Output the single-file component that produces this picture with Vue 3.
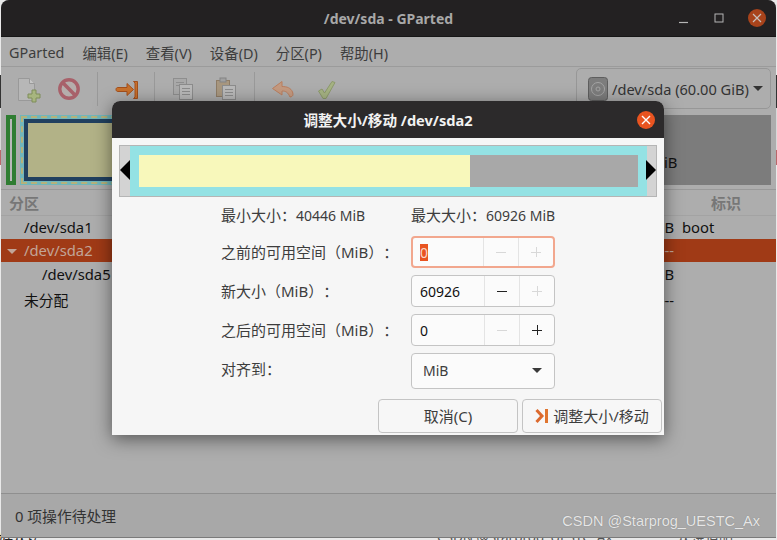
<script setup>
const menus = ['GParted', '编辑(E)', '查看(V)', '设备(D)', '分区(P)', '帮助(H)']
const rows = [
  { name: '/dev/sda1', cls: 'lvl0', tail: 'B', flag: 'boot' },
  { name: '/dev/sda2', cls: 'lvl0 sel', tail: '---', flag: '', caret: true },
  { name: '/dev/sda5', cls: 'lvl1', tail: 'B', flag: '' },
  { name: '未分配', cls: 'lvl0 tall', tail: '---', flag: '' }
]
const spins = [
  { label: '之前的可用空间（MiB）：', value: '0', minus: false, plus: false, focus: true },
  { label: '新大小（MiB）：', value: '60926', minus: true, plus: false, focus: false },
  { label: '之后的可用空间（MiB）：', value: '0', minus: false, plus: true, focus: false }
]
</script>

<template>
  <div class="screen">
    <div class="behind b1">好状接</div>
    <div class="behind b2">CSDN @Starprog_UESTC_Ax</div>
    <div class="behind b3">状况说明</div>
    <div class="window">
      <header class="titlebar">
        <span class="wintitle">/dev/sda - GParted</span>
        <div class="winbtns">
          <svg width="12" height="12" viewBox="0 0 12 12"><path d="M1 10.500h9" stroke="#b5b5b5" stroke-width="1.200"/></svg>
          <svg width="12" height="12" viewBox="0 0 12 12"><rect x="2" y="2" width="8" height="8" fill="none" stroke="#b5b5b5" stroke-width="1"/></svg>
          <span class="closebtn dim">
            <svg width="10" height="10" viewBox="0 0 10 10"><path d="M1 1l8 8M9 1l-8 8" stroke="#c8c0bc" stroke-width="1.200"/></svg>
          </span>
        </div>
      </header>
      <nav class="menubar">
        <span v-for="m in menus" :key="m">{{ m }}</span>
      </nav>
      <div class="toolbar">
        <div class="tools">
          <svg class="t-new" width="24" height="26" viewBox="0 0 24 26">
            <path d="M1.500 1.500h11l5 5v17h-16z" fill="#b7b7b7" stroke="#999"/>
            <path d="M12.500 1.500v5h5" fill="#c6c6c6" stroke="#999"/>
            <path d="M15 13h4v4h4v4h-4v4h-4v-4h-4v-4h4z" fill="#a7b57f" stroke="#7f8d5b"/>
          </svg>
          <svg class="t-no" width="24" height="24" viewBox="0 0 24 24">
            <circle cx="12" cy="12" r="9.200" fill="#b5aeac" stroke="#a8616a" stroke-width="3.400"/>
            <path d="M5.600 5.600l12.800 12.800" stroke="#a8616a" stroke-width="3.600"/>
          </svg>
          <i class="sep s1"></i>
          <svg class="t-move" width="24" height="20" viewBox="0 0 24 20">
            <path d="M1 9.500C1 8 2 7.500 3 7.500h9V3.500l6.500 6-6.500 6v-4H3c-1 0-2-.5-2-2z" fill="#c8712c" stroke="#a34f1c"/>
            <path d="M18.500 1.500h4v17h-4l1.500-1.500V3z" fill="#c8712c" stroke="#a34f1c"/>
          </svg>
          <i class="sep s2"></i>
          <svg class="t-copy" width="22" height="24" viewBox="0 0 22 24">
            <rect x="1.500" y="1.500" width="13" height="16" fill="#a9a9a9" stroke="#8e8e8e"/>
            <path d="M4 5.500h8M4 8.500h8" stroke="#8e8e8e"/>
            <rect x="7.500" y="7.500" width="13" height="15" fill="#b9b9b9" stroke="#8c8c8c"/>
            <path d="M10 11.500h8M10 14.500h8M10 17.500h8" stroke="#8c8c8c"/>
          </svg>
          <svg class="t-paste" width="22" height="24" viewBox="0 0 22 24">
            <rect x="1.500" y="3.500" width="13" height="16" fill="#a8977f" stroke="#8e7c66"/>
            <rect x="5" y="1" width="6" height="4" fill="#a0a0a0" stroke="#838383"/>
            <rect x="7.500" y="8.500" width="13" height="14" fill="#b9b9b9" stroke="#8c8c8c"/>
            <path d="M10 12.500h8M10 15.500h8M10 18.500h8" stroke="#8c8c8c"/>
          </svg>
          <i class="sep s3"></i>
          <svg class="t-undo" width="24" height="20" viewBox="0 0 24 20">
            <path d="M11 1.500L1.500 8.500 11 15v-4c4 0 6 1.500 8 6 3-.500 3.500-2 2.500-5C20 8 16 6.500 11 6.500z" fill="#c49a80" stroke="#bb7f5f" stroke-linejoin="round"/>
          </svg>
          <svg class="t-check" width="20" height="20" viewBox="0 0 20 20">
            <path d="M1.500 11l3.500-2 2.500 4L15 1.500l3 1L9 18.500H6z" fill="#a6b383" stroke="#8d9a6c"/>
          </svg>
        </div>
        <div class="devcombo">
          <svg width="20" height="24" viewBox="0 0 20 24">
            <rect x=".5" y=".5" width="19" height="23" rx="3" fill="#7d7d7d" stroke="#5e5e5e"/>
            <circle cx="10" cy="12" r="6.500" fill="none" stroke="#a5a5a5"/>
            <circle cx="10" cy="12" r="2" fill="none" stroke="#a5a5a5"/>
          </svg>
          <span class="devname">/dev/sda (60.00 GiB)</span>
          <i class="caret"></i>
        </div>
      </div>
      <section class="graph">
        <div class="g-first"><i></i></div>
        <div class="g-main"><div class="g-dash"><div class="g-inner"></div></div></div>
        <div class="g-last"><span>iB</span></div>
      </section>
      <section class="table">
        <div class="thead">
          <span>分区</span>
          <span class="h-flag">标识</span>
        </div>
        <div v-for="r in rows" :key="r.name" class="trow" :class="r.cls">
          <i v-if="r.caret" class="rowcaret"></i>
          <span class="pname">{{ r.name }}</span>
          <span class="ptail">{{ r.tail }}</span>
          <span class="pflag">{{ r.flag }}</span>
        </div>
      </section>
      <footer class="status">0 项操作待处理</footer>
    </div>

    <div class="dialog">
      <header class="dlgtitle">
        <span>调整大小/移动 /dev/sda2</span>
        <span class="closebtn">
          <svg width="10" height="10" viewBox="0 0 10 10"><path d="M1 1l8 8M9 1l-8 8" stroke="#fff" stroke-width="1.400"/></svg>
        </span>
      </header>
      <div class="dlgbody">
        <div class="resizer">
          <i class="arrow left"></i>
          <div class="rz-outer">
            <div class="rz-used"></div>
            <div class="rz-free"></div>
          </div>
          <i class="arrow right"></i>
        </div>
        <div class="info">
          <div class="info-cell">最小大小：<b>40446 MiB</b></div>
          <div class="info-cell">最大大小：<b>60926 MiB</b></div>
        </div>
        <div class="form">
          <template v-for="s in spins" :key="s.label">
            <label>{{ s.label }}</label>
            <div class="spin" :class="{ focus: s.focus }">
              <span class="val"><em v-if="s.focus">{{ s.value }}</em><template v-else>{{ s.value }}</template></span>
              <span class="sb" :class="{ off: !s.minus }"><svg width="14" height="14" viewBox="0 0 14 14"><path d="M2 7.500h10" stroke="currentColor"/></svg></span>
              <span class="sb" :class="{ off: !s.plus }"><svg width="14" height="14" viewBox="0 0 14 14"><path d="M2 7.500h10M7.500 2v10" stroke="currentColor"/></svg></span>
            </div>
          </template>
          <label>对齐到：</label>
          <div class="combo"><span>MiB</span><i class="caret"></i></div>
        </div>
        <div class="actions">
          <button class="btn"><span>取消(C)</span></button>
          <button class="btn">
            <svg width="14" height="16" viewBox="0 0 14 16">
              <path d="M1.500 2l5.500 6-5.500 6" fill="none" stroke="#dc6a2e" stroke-width="3"/>
              <path d="M11.500 1v14" stroke="#e0752f" stroke-width="3"/>
            </svg>
            <span>调整大小/移动</span>
          </button>
        </div>
      </div>
    </div>
    <div class="watermark">CSDN @Starprog_UESTC_Ax</div>
  </div>
</template>

<style>
html, body { margin: 0; background: #fff; overflow: hidden; }
</style>

<style scoped>
.screen {
  position: relative;
  width: 777px;
  height: 540px;
  overflow: hidden;
  background: linear-gradient(to bottom, #e9e9e9 75px, #333 75px, #333 108px, #d9d9d9 108px, #d9d9d9 150px, #b9676a 150px, #b9676a 165px, #e9e9e9 165px);
  font-family: "Noto Sans", "Noto Sans CJK SC", sans-serif;
  font-size: 14.800px;
  color: #1d1d1d;
  text-spacing-trim: space-all;
}
.behind {
  position: absolute;
  top: 528px;
  font-size: 14px;
  color: #555;
  white-space: nowrap;
}
.b1 { left: -1px; color: #222; }
.b2 { left: 437px; font-size: 13.500px; }
.b3 { left: 677px; }
.window {
  position: relative;
  margin-left: 1px;
  width: 775px;
  height: 537px;
  display: flex;
  flex-direction: column;
  background: #adadad;
  border-radius: 8px 8px 0 0;
  overflow: hidden;
  border-bottom: 1px solid #7a7a7a;
}
.titlebar {
  height: 37px;
  flex: none;
  position: relative;
  background: #232122;
  display: flex;
  align-items: center;
  justify-content: center;
  border-bottom: 1px solid #161616;
  box-sizing: border-box;
}
.wintitle { color: #a8a8a8; font-weight: 700; font-size: 14px; }
.winbtns {
  position: absolute;
  right: 10px;
  top: 9px;
  display: flex;
  align-items: center;
  gap: 23px;
}
.closebtn {
  width: 18px;
  height: 18px;
  border-radius: 50%;
  background: #e95420;
  display: flex;
  align-items: center;
  justify-content: center;
}
.closebtn.dim { background: #a8431b; }
.menubar {
  height: 30px;
  flex: none;
  display: flex;
  align-items: center;
  gap: 18px;
  padding: 1px 0 0 8px;
  font-size: 14.400px;
  color: #3d3d3d;
  border-bottom: 1px solid #9b9b9b;
  box-sizing: border-box;
}
.toolbar {
  height: 45px;
  flex: none;
  display: flex;
  justify-content: space-between;
  padding: 1px 5px 0 0;
  box-sizing: border-box;
}
.tools { display: flex; align-items: flex-start; flex: 1; }
.tools svg { flex: none; margin-top: 9px; }
.tools .t-new { margin-left: 16px; }
.tools .t-no { margin-left: 16px; }
.sep { flex: none; width: 1px; height: 34px; background: #999; margin-top: 4px; }
.s1 { margin-left: 16px; }
.tools .t-move { margin-left: 17px; margin-top: 12px; }
.s2 { margin-left: 15px; }
.tools .t-copy { margin-left: 17px; }
.tools .t-paste { margin-left: 21px; }
.s3 { margin-left: 17px; }
.tools .t-undo { margin-left: 16px; margin-top: 12px; }
.tools .t-check { margin-left: 22px; margin-top: 12px; }
.devcombo {
  width: 195px;
  height: 41px;
  flex: none;
  display: flex;
  align-items: center;
  gap: 4px;
  padding-left: 11px;
  box-sizing: border-box;
  border: 1px solid #979797;
  border-radius: 5px;
  color: #333;
  font-size: 14.600px;
}
.devcombo svg { flex: none; }
.devname { white-space: nowrap; flex: none; }
.devcombo .caret { margin-left: 0; border-top-color: #333; }
.caret {
  display: block;
  width: 0;
  height: 0;
  border-left: 5px solid transparent;
  border-right: 5px solid transparent;
  border-top: 5px solid #3a3a3a;
}
.graph {
  height: 77px;
  flex: none;
  display: flex;
  gap: 4px;
  padding: 3px 5px 4px;
  box-sizing: border-box;
}
.g-first {
  width: 10px;
  background: #2f7d32;
  display: flex;
  justify-content: center;
  padding: 4px 0;
  box-sizing: border-box;
}
.g-first i { width: 2px; background: #b9b9b9; }
.g-main {
  flex: 1;
  padding: 1px;
  box-sizing: border-box;
  background: #71b6bb;
}
.g-dash {
  height: 100%;
  box-sizing: border-box;
  border: 2px dashed #b5b27a;
  padding: 1px;
}
.g-inner { height: 100%; box-sizing: border-box; border: 4px solid #21405f; background: #b2b287; }
.g-last {
  width: 107px;
  background: #7c7c7c;
  position: relative;
}
.g-last span { position: absolute; left: 0; top: 37px; color: #111; }
.table { flex: 1; border-top: 1px solid #999; display: flex; flex-direction: column; }
.thead {
  height: 26px;
  flex: none;
  display: flex;
  align-items: center;
  justify-content: space-between;
  padding: 0 35px 0 8px;
  font-weight: 700;
  font-size: 15px;
  color: #777;
  border-bottom: 1px solid #a3a3a3;
  box-sizing: border-box;
}
.trow {
  height: 23px;
  flex: none;
  position: relative;
  display: flex;
  align-items: center;
  color: #111;
  box-sizing: border-box;
}
.trow.lvl0 { padding-bottom: 1px; }
.trow.tall { height: 30px; }
.sel { background: #a03a16; color: #c2a598; }
.lvl0 .pname { margin-left: 23px; }
.lvl1 .pname { margin-left: 41px; }
.rowcaret {
  position: absolute;
  left: 6px;
  top: 10px;
  width: 0;
  height: 0;
  border-left: 5px solid transparent;
  border-right: 5px solid transparent;
  border-top: 5px solid #c2a598;
}
.ptail { position: absolute; right: 102px; }
.pflag { position: absolute; left: 681px; }
.status {
  height: 44px;
  flex: none;
  display: flex;
  align-items: center;
  padding-left: 14px;
  border-top: 1px solid #8f8f8f;
  background: #a8a8a8;
  color: #333;
  box-sizing: border-box;
}
.dialog {
  position: absolute;
  left: 112px;
  top: 101px;
  width: 552px;
  height: 334px;
  display: flex;
  flex-direction: column;
  border-radius: 8px 8px 0 0;
  overflow: hidden;
  background: #f6f6f6;
  box-shadow: 0 4px 18px rgba(0, 0, 0, .5);
}
.dlgtitle {
  height: 37px;
  flex: none;
  background: #2c2a2b;
  color: #f2f2f2;
  font-weight: 700;
  font-size: 14.600px;
  display: flex;
  align-items: center;
  justify-content: center;
  position: relative;
}
.dlgtitle .closebtn { position: absolute; right: 9px; top: 10px; }
.dlgbody { flex: 1; padding: 7px 2px 2px 7px; box-sizing: border-box; display: flex; flex-direction: column; }
.resizer {
  height: 52px;
  width: 538px;
  flex: none;
  box-sizing: border-box;
  border: 1px solid #b5b5b5;
  background: #d3d3d3;
  display: flex;
  align-items: center;
  position: relative;
  padding: 0 9px 0 10px;
}
.rz-outer {
  flex: 1;
  align-self: stretch;
  background: #94e2e4;
  padding: 9px;
  display: flex;
}
.rz-used { width: 331px; background: #f8f8bb; }
.rz-free { flex: 1; background: #a8a8a8; }
.arrow { position: absolute; top: 14px; width: 0; height: 0; border-top: 10px solid transparent; border-bottom: 10px solid transparent; }
.arrow.left { left: 0; border-right: 10px solid #000; }
.arrow.right { right: 0; border-left: 10px solid #000; }
.info {
  display: flex;
  margin: 7px 0 0 102px;
  height: 21px;
  align-items: center;
  color: #3d3d3d;
  font-size: 15px;
}
.info-cell { width: 190px; white-space: nowrap; }
.info-cell b { font-weight: 400; font-size: 14px; }
.form {
  display: grid;
  grid-template-columns: 190px 144px;
  grid-auto-rows: 32px;
  row-gap: 7px;
  margin: 11px 0 0 102px;
  align-items: center;
  font-size: 15px;
  color: #3d3d3d;
}
.form label { white-space: nowrap; padding-bottom: 2px; }
.spin {
  height: 32px;
  display: flex;
  box-sizing: border-box;
  border: 1px solid #c4c4c4;
  border-radius: 4px;
  background: #fbfbfb;
  color: #111;
}
.spin.focus { border: 2px solid #f2a78e; }
.val { flex: 1; padding-left: 8px; display: flex; align-items: center; font-size: 14px; }
.focus .val { padding-left: 7px; }
.val em { font-style: normal; background: #e95420; color: #f7d8cb; line-height: 17px; }
.sb {
  width: 35px;
  flex: none;
  box-sizing: border-box;
  border-left: 1px solid #e4e4e4;
  display: flex;
  align-items: center;
  justify-content: center;
  color: #222;
}
.sb.off { color: #d8d8d8; }
.combo {
  height: 36px;
  box-sizing: border-box;
  border: 1px solid #c4c4c4;
  border-radius: 4px;
  background: #fbfbfb;
  display: flex;
  align-items: center;
  justify-content: space-between;
  padding: 0 12px 1px 11px;
  font-size: 14px;
  align-self: start;
}
.actions {
  margin-top: auto;
  display: flex;
  justify-content: flex-end;
  gap: 4px;
}
.btn {
  width: 140px;
  height: 34px;
  border: 1px solid #c4c4c4;
  border-radius: 4px;
  background: #f7f7f7;
  font: inherit;
  font-size: 15px;
  color: #3d3d3d;
  display: flex;
  align-items: center;
  justify-content: center;
  gap: 4px;
  padding: 0 0 1px;
}
.btn svg { flex: none; }
.watermark {
  position: absolute;
  right: 17px;
  bottom: 11px;
  font-family: "Liberation Sans", sans-serif;
  font-size: 14.500px;
  color: #e6e6e6;
  text-shadow: 0 0 1px #777;
}
</style>
